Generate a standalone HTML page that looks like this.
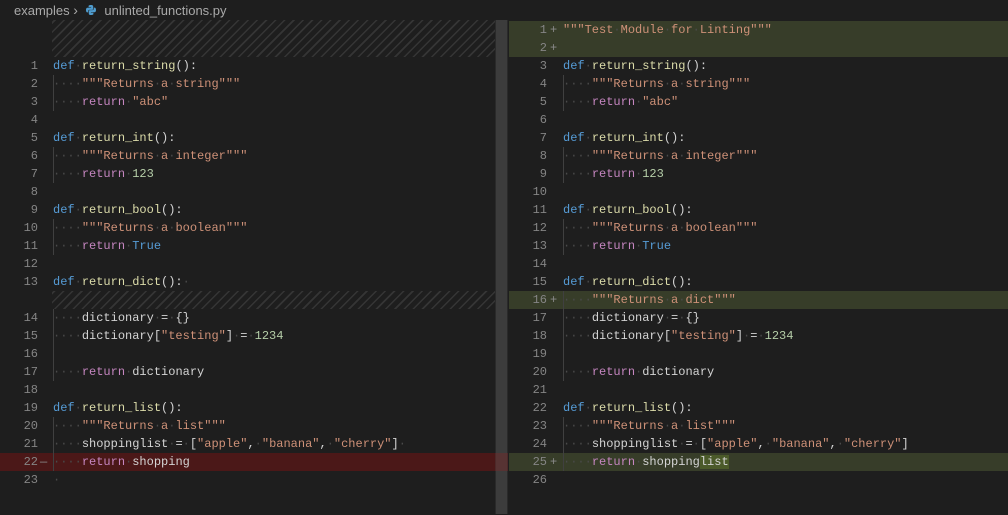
<!DOCTYPE html>
<html><head><meta charset="utf-8"><style>
body{margin:0;width:1008px;height:514px;background:#1e1e1e;overflow:hidden;font-family:"Liberation Mono",monospace;font-size:12px;color:#d4d4d4;position:relative}
.bc{position:absolute;left:14px;top:0;height:20px;line-height:20px;font-family:"Liberation Sans",sans-serif;font-size:13px;color:#a9a9a9}
.pane{position:absolute;top:21px;height:494px}
.row{position:absolute;left:0;right:0;height:18px;line-height:18px;white-space:pre}
.ln{position:absolute;width:38px;text-align:right;color:#858585}
.pm{position:absolute;color:#8a8a8a}
.c{position:absolute}
.g::before{content:"";position:absolute;left:0;top:0;height:18px;border-left:1px solid #404040}
.k{color:#569cd6}.f{color:#dcdcaa}.s{color:#ce9178}.r{color:#c586c0}.n{color:#b5cea8}.d{color:#4a4a4a}
.hatch{background:repeating-linear-gradient(-45deg,#1e1e1e 0 5px,#353535 5px 6.5px)}
.add{background:#373d29}.del{background:#4b1818}
</style></head><body>
<div class="bc">examples <span style="font-size:14px">›</span>&nbsp; <svg width="12" height="12" viewBox="0 0 12 12" style="vertical-align:-1px"><path d="M6 1C3.5 1 3.6 2 3.6 2v1.3H6.1v.5H2.5S1 3.6 1 6s1.3 2.4 1.3 2.4h.9V7.2s0-1.3 1.3-1.3h2.4s1.3 0 1.3-1.2V2.3S8.3 1 6 1z" fill="#4e9bcd"/><path d="M6 11c2.5 0 2.4-1 2.4-1V8.7H5.9v-.5h3.6S11 8.4 11 6s-1.3-2.4-1.3-2.4h-.9v1.2s0 1.3-1.3 1.3H5.1s-1.3 0-1.3 1.2v2.4S3.7 11 6 11z" fill="#4e9bcd"/></svg>&nbsp; unlinted_functions.py</div>

<div class="pane" style="left:0;width:495px">
<div class="row hatch" style="top:-1px;left:52px;height:37px"></div>
<div class="row" style="top:36px"><span class="ln">1</span><span class="c" style="left:53px"><span class="k">def</span><span class="d">·</span><span class="f">return_string</span>():</span></div>
<div class="row" style="top:54px"><span class="ln">2</span><span class="c g" style="left:53px"><span class="d">····</span><span class="s">"""Returns<span class="d">·</span>a<span class="d">·</span>string"""</span></span></div>
<div class="row" style="top:72px"><span class="ln">3</span><span class="c g" style="left:53px"><span class="d">····</span><span class="r">return</span><span class="d">·</span><span class="s">"abc"</span></span></div>
<div class="row" style="top:90px"><span class="ln">4</span></div>
<div class="row" style="top:108px"><span class="ln">5</span><span class="c" style="left:53px"><span class="k">def</span><span class="d">·</span><span class="f">return_int</span>():</span></div>
<div class="row" style="top:126px"><span class="ln">6</span><span class="c g" style="left:53px"><span class="d">····</span><span class="s">"""Returns<span class="d">·</span>a<span class="d">·</span>integer"""</span></span></div>
<div class="row" style="top:144px"><span class="ln">7</span><span class="c g" style="left:53px"><span class="d">····</span><span class="r">return</span><span class="d">·</span><span class="n">123</span></span></div>
<div class="row" style="top:162px"><span class="ln">8</span></div>
<div class="row" style="top:180px"><span class="ln">9</span><span class="c" style="left:53px"><span class="k">def</span><span class="d">·</span><span class="f">return_bool</span>():</span></div>
<div class="row" style="top:198px"><span class="ln">10</span><span class="c g" style="left:53px"><span class="d">····</span><span class="s">"""Returns<span class="d">·</span>a<span class="d">·</span>boolean"""</span></span></div>
<div class="row" style="top:216px"><span class="ln">11</span><span class="c g" style="left:53px"><span class="d">····</span><span class="r">return</span><span class="d">·</span><span class="k">True</span></span></div>
<div class="row" style="top:234px"><span class="ln">12</span></div>
<div class="row" style="top:252px"><span class="ln">13</span><span class="c" style="left:53px"><span class="k">def</span><span class="d">·</span><span class="f">return_dict</span>():<span class="d">·</span></span></div>
<div class="row hatch" style="top:270px;left:52px"></div>
<div class="row" style="top:288px"><span class="ln">14</span><span class="c g" style="left:53px"><span class="d">····</span>dictionary<span class="d">·</span>=<span class="d">·</span>{}</span></div>
<div class="row" style="top:306px"><span class="ln">15</span><span class="c g" style="left:53px"><span class="d">····</span>dictionary[<span class="s">"testing"</span>]<span class="d">·</span>=<span class="d">·</span><span class="n">1234</span></span></div>
<div class="row" style="top:324px"><span class="ln">16</span><span class="c g" style="left:53px"></span></div>
<div class="row" style="top:342px"><span class="ln">17</span><span class="c g" style="left:53px"><span class="d">····</span><span class="r">return</span><span class="d">·</span>dictionary</span></div>
<div class="row" style="top:360px"><span class="ln">18</span></div>
<div class="row" style="top:378px"><span class="ln">19</span><span class="c" style="left:53px"><span class="k">def</span><span class="d">·</span><span class="f">return_list</span>():</span></div>
<div class="row" style="top:396px"><span class="ln">20</span><span class="c g" style="left:53px"><span class="d">····</span><span class="s">"""Returns<span class="d">·</span>a<span class="d">·</span>list"""</span></span></div>
<div class="row" style="top:414px"><span class="ln">21</span><span class="c g" style="left:53px"><span class="d">····</span>shoppinglist<span class="d">·</span>=<span class="d">·</span>[<span class="s">"apple"</span>,<span class="d">·</span><span class="s">"banana"</span>,<span class="d">·</span><span class="s">"cherry"</span>]<span class="d">·</span></span></div>
<div class="row del" style="top:432px;right:-13px"><span class="ln">22</span><span class="pm" style="left:40px">—</span><span class="c g" style="left:53px"><span class="d">····</span><span class="r">return</span><span class="d">·</span>shopping</span></div>
<div class="row" style="top:450px"><span class="ln">23</span><span class="c" style="left:53px"><span class="d">·</span></span></div>
</div>
<div style="position:absolute;left:495px;top:20px;width:13px;height:494px;background:#3c3c3c;border-left:1px solid #2a2a2a;border-right:1px solid #2a2a2a;box-sizing:border-box"></div>
<div style="position:absolute;left:495px;top:453px;width:13px;height:18px;background:rgba(120,40,40,.45)"></div>

<div class="pane" style="left:509px;width:499px">
<div class="row add" style="top:0"><span class="ln">1</span><span class="pm" style="left:41px">+</span><span class="c" style="left:54px"><span class="s">"""Test<span class="d">·</span>Module<span class="d">·</span>for<span class="d">·</span>Linting"""</span></span></div>
<div class="row add" style="top:18px"><span class="ln">2</span><span class="pm" style="left:41px">+</span></div>
<div class="row" style="top:36px"><span class="ln">3</span><span class="c" style="left:54px"><span class="k">def</span><span class="d">·</span><span class="f">return_string</span>():</span></div>
<div class="row" style="top:54px"><span class="ln">4</span><span class="c g" style="left:54px"><span class="d">····</span><span class="s">"""Returns<span class="d">·</span>a<span class="d">·</span>string"""</span></span></div>
<div class="row" style="top:72px"><span class="ln">5</span><span class="c g" style="left:54px"><span class="d">····</span><span class="r">return</span><span class="d">·</span><span class="s">"abc"</span></span></div>
<div class="row" style="top:90px"><span class="ln">6</span></div>
<div class="row" style="top:108px"><span class="ln">7</span><span class="c" style="left:54px"><span class="k">def</span><span class="d">·</span><span class="f">return_int</span>():</span></div>
<div class="row" style="top:126px"><span class="ln">8</span><span class="c g" style="left:54px"><span class="d">····</span><span class="s">"""Returns<span class="d">·</span>a<span class="d">·</span>integer"""</span></span></div>
<div class="row" style="top:144px"><span class="ln">9</span><span class="c g" style="left:54px"><span class="d">····</span><span class="r">return</span><span class="d">·</span><span class="n">123</span></span></div>
<div class="row" style="top:162px"><span class="ln">10</span></div>
<div class="row" style="top:180px"><span class="ln">11</span><span class="c" style="left:54px"><span class="k">def</span><span class="d">·</span><span class="f">return_bool</span>():</span></div>
<div class="row" style="top:198px"><span class="ln">12</span><span class="c g" style="left:54px"><span class="d">····</span><span class="s">"""Returns<span class="d">·</span>a<span class="d">·</span>boolean"""</span></span></div>
<div class="row" style="top:216px"><span class="ln">13</span><span class="c g" style="left:54px"><span class="d">····</span><span class="r">return</span><span class="d">·</span><span class="k">True</span></span></div>
<div class="row" style="top:234px"><span class="ln">14</span></div>
<div class="row" style="top:252px"><span class="ln">15</span><span class="c" style="left:54px"><span class="k">def</span><span class="d">·</span><span class="f">return_dict</span>():</span></div>
<div class="row add" style="top:270px"><span class="ln">16</span><span class="pm" style="left:41px">+</span><span class="c g" style="left:54px"><span class="d">····</span><span class="s">"""Returns<span class="d">·</span>a<span class="d">·</span>dict"""</span></span></div>
<div class="row" style="top:288px"><span class="ln">17</span><span class="c g" style="left:54px"><span class="d">····</span>dictionary<span class="d">·</span>=<span class="d">·</span>{}</span></div>
<div class="row" style="top:306px"><span class="ln">18</span><span class="c g" style="left:54px"><span class="d">····</span>dictionary[<span class="s">"testing"</span>]<span class="d">·</span>=<span class="d">·</span><span class="n">1234</span></span></div>
<div class="row" style="top:324px"><span class="ln">19</span><span class="c g" style="left:54px"></span></div>
<div class="row" style="top:342px"><span class="ln">20</span><span class="c g" style="left:54px"><span class="d">····</span><span class="r">return</span><span class="d">·</span>dictionary</span></div>
<div class="row" style="top:360px"><span class="ln">21</span></div>
<div class="row" style="top:378px"><span class="ln">22</span><span class="c" style="left:54px"><span class="k">def</span><span class="d">·</span><span class="f">return_list</span>():</span></div>
<div class="row" style="top:396px"><span class="ln">23</span><span class="c g" style="left:54px"><span class="d">····</span><span class="s">"""Returns<span class="d">·</span>a<span class="d">·</span>list"""</span></span></div>
<div class="row" style="top:414px"><span class="ln">24</span><span class="c g" style="left:54px"><span class="d">····</span>shoppinglist<span class="d">·</span>=<span class="d">·</span>[<span class="s">"apple"</span>,<span class="d">·</span><span class="s">"banana"</span>,<span class="d">·</span><span class="s">"cherry"</span>]</span></div>
<div class="row add" style="top:432px"><span class="ln">25</span><span class="pm" style="left:41px">+</span><span class="c g" style="left:54px"><span class="d">····</span><span class="r">return</span><span class="d">·</span>shopping<span style="background:#4b5a2a">list</span></span></div>
<div class="row" style="top:450px"><span class="ln">26</span></div>
</div>
</body></html>
